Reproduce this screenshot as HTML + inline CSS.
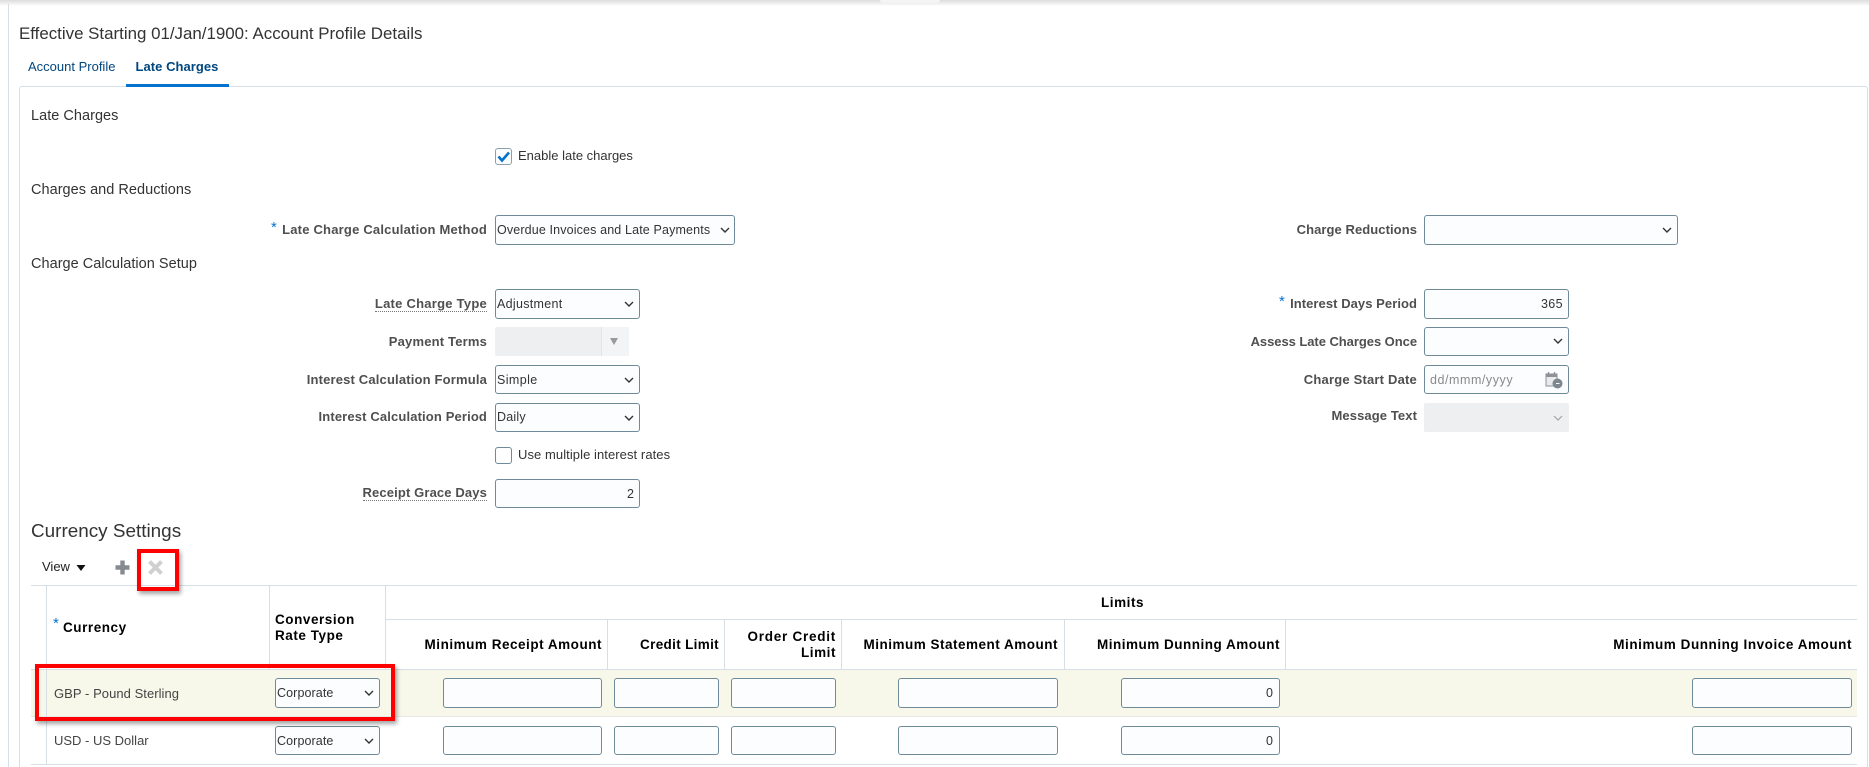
<!DOCTYPE html>
<html><head><meta charset="utf-8"><title>Account Profile Details</title>
<style>
html,body{margin:0;padding:0;background:#fff;width:1869px;height:767px;overflow:hidden}
body{position:relative;font-family:"Liberation Sans",Arial,sans-serif;color:#333}
.a{position:absolute;box-sizing:border-box}
.t{position:absolute;white-space:nowrap;line-height:20px;height:20px;font-size:13px;margin-top:1px}
.n{margin-top:0}
.h{font-size:14.5px;color:#333;letter-spacing:.03px}
.l{font-weight:bold;color:#4f4f4f;font-size:13px}
.k{font-weight:bold;color:#000;font-size:13.5px;letter-spacing:.55px}
.v{font-size:12.5px}
.f{position:absolute;box-sizing:border-box;background:#fcfdfe;border:1px solid #6f8a99;border-radius:3px}
.d{position:absolute;box-sizing:border-box;background:#eeeff1;border-radius:2px}
.line{position:absolute;background:#d6dfe6}
.s{color:#0572ce}
svg{position:absolute;overflow:visible}
.r{position:absolute;box-sizing:border-box;border:4px solid #f00;box-shadow:2px 3px 4px rgba(0,0,0,.35)}
.dot{position:absolute;height:0;border-top:1px dotted #777}
</style></head><body>

<div class="a" style="left:0;top:0;width:1869px;height:6px;background:linear-gradient(#dcdcdc,#fff)"></div>
<div class="a" style="left:880px;top:0;width:60px;height:3px;background:#f4f4f4;border-radius:0 0 6px 6px"></div>
<div class="line" style="left:8px;top:4px;width:1px;height:763px"></div>

<div class="t" style="left:19px;top:23px;font-size:16.9px;color:#333">Effective Starting 01/Jan/1900: Account Profile Details</div>
<div class="t n" style="left:28px;top:57px;color:#00467f">Account Profile</div>
<div class="t n" style="left:135.5px;top:57px;color:#00467f;font-weight:bold;letter-spacing:.05px">Late Charges</div>

<div class="a" style="left:19px;top:86px;width:1849px;height:690px;border:1px solid #d6dfe6;border-radius:3px 3px 0 0"></div>
<div class="a" style="left:126px;top:84px;width:103px;height:3px;background:#0572ce"></div>

<div class="t h" style="left:31px;top:105px">Late Charges</div>
<div class="t h" style="left:31px;top:179px">Charges and Reductions</div>
<div class="t h" style="left:31px;top:253px">Charge Calculation Setup</div>

<div class="f" style="left:495px;top:148px;width:17px;height:17px;border-color:#8aa0ad"></div>
<svg style="left:495px;top:148px" width="17" height="17" viewBox="0 0 17 17"><path d="M3.5 8.5 L7 12.5 L14 4.5" fill="none" stroke="#0572ce" stroke-width="2.6"/></svg>
<div class="t n" style="left:518px;top:146px">Enable late charges</div>

<div class="t s" style="left:271px;top:217px;font-size:15px">*</div>
<div class="t l" style="right:1382px;top:219px;letter-spacing:.21px">Late Charge Calculation Method</div>
<div class="f" style="left:495px;top:215px;width:240px;height:30px"></div>
<div class="t v" style="left:497px;top:219px;letter-spacing:.14px">Overdue Invoices and Late Payments</div>
<svg style="left:720px;top:227px" width="10" height="7" viewBox="0 0 10 7"><path d="M1 1 L5 5 L9 1" fill="none" stroke="#333" stroke-width="1.4"/></svg>

<div class="t l" style="right:452px;top:219px;letter-spacing:.07px">Charge Reductions</div>
<div class="f" style="left:1424px;top:215px;width:254px;height:30px"></div>
<svg style="left:1662px;top:227px" width="10" height="7" viewBox="0 0 10 7"><path d="M1 1 L5 5 L9 1" fill="none" stroke="#333" stroke-width="1.4"/></svg>

<div class="t l" style="right:1382px;top:293px;letter-spacing:.25px">Late Charge Type</div>
<div class="dot" style="left:375px;top:311px;width:112px"></div>
<div class="f" style="left:495px;top:289px;width:145px;height:30px"></div>
<div class="t v" style="left:497px;top:293px;letter-spacing:.3px">Adjustment</div>
<svg style="left:624px;top:301px" width="10" height="7" viewBox="0 0 10 7"><path d="M1 1 L5 5 L9 1" fill="none" stroke="#333" stroke-width="1.4"/></svg>

<div class="t l" style="right:1382px;top:331px;letter-spacing:.18px">Payment Terms</div>
<div class="d" style="left:495px;top:327px;width:134px;height:29px"></div>
<div class="a" style="left:601px;top:327px;width:28px;height:29px;border-left:1px solid #e2e4e6;background:#f3f4f5"></div>
<svg style="left:609px;top:337px" width="10" height="9" viewBox="0 0 10 9"><path d="M1 1 H9 L5 8 Z" fill="#9a9a9a"/></svg>

<div class="t l" style="right:1382px;top:369px;letter-spacing:.17px">Interest Calculation Formula</div>
<div class="f" style="left:495px;top:365px;width:145px;height:29px"></div>
<div class="t v" style="left:497px;top:369px;letter-spacing:.4px">Simple</div>
<svg style="left:624px;top:377px" width="10" height="7" viewBox="0 0 10 7"><path d="M1 1 L5 5 L9 1" fill="none" stroke="#333" stroke-width="1.4"/></svg>

<div class="t l n" style="right:1382px;top:407px;letter-spacing:.14px">Interest Calculation Period</div>
<div class="f" style="left:495px;top:403px;width:145px;height:29px"></div>
<div class="t v n" style="left:497px;top:407px;letter-spacing:.2px">Daily</div>
<svg style="left:624px;top:415px" width="10" height="7" viewBox="0 0 10 7"><path d="M1 1 L5 5 L9 1" fill="none" stroke="#333" stroke-width="1.4"/></svg>

<div class="f" style="left:495px;top:447px;width:17px;height:17px;background:#fff"></div>
<div class="t n" style="left:518px;top:445px;letter-spacing:.07px">Use multiple interest rates</div>

<div class="t l n" style="right:1382px;top:483px;letter-spacing:.13px">Receipt Grace Days</div>
<div class="dot" style="left:363px;top:500px;width:124px"></div>
<div class="f" style="left:495px;top:479px;width:145px;height:29px"></div>
<div class="t v" style="right:1235px;top:483px">2</div>

<div class="t s" style="left:1279px;top:291px;font-size:15px">*</div>
<div class="t l" style="right:452px;top:293px;letter-spacing:.06px">Interest Days Period</div>
<div class="f" style="left:1424px;top:289px;width:145px;height:30px"></div>
<div class="t v" style="right:306px;top:293px;letter-spacing:.4px">365</div>

<div class="t l" style="right:452px;top:331px;letter-spacing:-.05px">Assess Late Charges Once</div>
<div class="f" style="left:1424px;top:327px;width:145px;height:29px"></div>
<svg style="left:1553px;top:338px" width="10" height="7" viewBox="0 0 10 7"><path d="M1 1 L5 5 L9 1" fill="none" stroke="#333" stroke-width="1.4"/></svg>

<div class="t l" style="right:452px;top:369px;letter-spacing:.2px">Charge Start Date</div>
<div class="f" style="left:1424px;top:365px;width:145px;height:29px"></div>
<div class="t v" style="left:1430px;top:369px;color:#8a8a8a;letter-spacing:.55px">dd/mmm/yyyy</div>
<svg style="left:1545px;top:371px" width="18" height="18" viewBox="0 0 18 18"><rect x="1" y="3" width="11" height="12" fill="#e8eaec" stroke="#8c9298" stroke-width="1"/><rect x="1" y="3" width="11" height="3" fill="#8c9298"/><path d="M3.5 1V4M9.5 1V4" stroke="#8c9298" stroke-width="1.4"/><circle cx="12.5" cy="12.5" r="5" fill="#7f878e"/><path d="M11 12.5H14.5" stroke="#fff" stroke-width="1"/></svg>

<div class="t l n" style="right:452px;top:406px;letter-spacing:.1px">Message Text</div>
<div class="d" style="left:1424px;top:403px;width:145px;height:29px"></div>
<svg style="left:1553px;top:415px" width="10" height="7" viewBox="0 0 10 7"><path d="M1 1 L5 5 L9 1" fill="none" stroke="#a5a5a5" stroke-width="1.2"/></svg>

<div class="t" style="left:31px;top:521px;font-size:18.9px;color:#333">Currency Settings</div>

<div class="t n" style="left:42px;top:557px;color:#222">View</div>
<svg style="left:76px;top:565px" width="10" height="6" viewBox="0 0 10 6"><path d="M0.5 0 H9.5 L5 6 Z" fill="#111"/></svg>
<svg style="left:115px;top:560px" width="15" height="15" viewBox="0 0 15 15"><path d="M7.5 0.5V14.5M0.5 7.5H14.5" stroke="#858b90" stroke-width="4.4"/></svg>
<svg style="left:148px;top:560px" width="15" height="15" viewBox="0 0 15 15"><path d="M1.5 1.5L13.5 13.5M13.5 1.5L1.5 13.5" stroke="#cfd0d1" stroke-width="4"/></svg>

<!-- table -->
<div class="a" style="left:31px;top:669px;width:1826px;height:47px;background:#f7f8e9"></div>
<div class="line" style="left:31px;top:585px;width:1826px;height:1px"></div>
<div class="line" style="left:385px;top:619px;width:1472px;height:1px"></div>
<div class="line" style="left:31px;top:669px;width:1826px;height:1px"></div>
<div class="line" style="left:31px;top:716px;width:1826px;height:1px;background:#e8e8e4"></div>
<div class="line" style="left:31px;top:764px;width:1826px;height:1px"></div>
<div class="line" style="left:46px;top:586px;width:1px;height:178px"></div>
<div class="line" style="left:269px;top:586px;width:1px;height:83px"></div>
<div class="line" style="left:385px;top:586px;width:1px;height:83px"></div>
<div class="line" style="left:607px;top:620px;width:1px;height:49px"></div>
<div class="line" style="left:724px;top:620px;width:1px;height:49px"></div>
<div class="line" style="left:841px;top:620px;width:1px;height:49px"></div>
<div class="line" style="left:1064px;top:620px;width:1px;height:49px"></div>
<div class="line" style="left:1285px;top:620px;width:1px;height:49px"></div>

<div class="t s" style="left:53px;top:613px;font-size:15px">*</div>
<div class="t k" style="left:63px;top:617px">Currency</div>
<div class="t k" style="left:275px;top:609px">Conversion</div>
<div class="t k" style="left:275px;top:625px">Rate Type</div>
<div class="t k" style="left:1101px;top:592px">Limits</div>
<div class="t k" style="right:1267px;top:634px;letter-spacing:.52px">Minimum Receipt Amount</div>
<div class="t k" style="right:1150px;top:634px;letter-spacing:.33px">Credit Limit</div>
<div class="t k" style="right:1033px;top:626px;letter-spacing:.75px">Order Credit</div>
<div class="t k" style="right:1033px;top:642px">Limit</div>
<div class="t k" style="right:811px;top:634px;letter-spacing:.5px">Minimum Statement Amount</div>
<div class="t k" style="right:589px;top:634px;letter-spacing:.5px">Minimum Dunning Amount</div>
<div class="t k" style="right:17px;top:634px">Minimum Dunning Invoice Amount</div>

<div class="t" style="left:54px;top:683px;color:#444;letter-spacing:.05px">GBP - Pound Sterling</div>
<div class="f" style="left:275px;top:678px;width:105px;height:30px"></div>
<div class="t v" style="left:277px;top:682px;letter-spacing:.1px">Corporate</div>
<svg style="left:364px;top:690px" width="10" height="7" viewBox="0 0 10 7"><path d="M1 1 L5 5 L9 1" fill="none" stroke="#333" stroke-width="1.4"/></svg>
<div class="f" style="left:443px;top:678px;width:159px;height:30px"></div>
<div class="f" style="left:614px;top:678px;width:105px;height:30px"></div>
<div class="f" style="left:731px;top:678px;width:105px;height:30px"></div>
<div class="f" style="left:898px;top:678px;width:160px;height:30px"></div>
<div class="f" style="left:1121px;top:678px;width:159px;height:30px"></div>
<div class="t v n" style="right:596px;top:683px">0</div>
<div class="f" style="left:1692px;top:678px;width:160px;height:30px"></div>

<div class="t" style="left:54px;top:730px;color:#444">USD - US Dollar</div>
<div class="f" style="left:275px;top:726px;width:105px;height:29px"></div>
<div class="t v" style="left:277px;top:730px;letter-spacing:.1px">Corporate</div>
<svg style="left:364px;top:738px" width="10" height="7" viewBox="0 0 10 7"><path d="M1 1 L5 5 L9 1" fill="none" stroke="#333" stroke-width="1.4"/></svg>
<div class="f" style="left:443px;top:726px;width:159px;height:29px"></div>
<div class="f" style="left:614px;top:726px;width:105px;height:29px"></div>
<div class="f" style="left:731px;top:726px;width:105px;height:29px"></div>
<div class="f" style="left:898px;top:726px;width:160px;height:29px"></div>
<div class="f" style="left:1121px;top:726px;width:159px;height:29px"></div>
<div class="t v" style="right:596px;top:730px">0</div>
<div class="f" style="left:1692px;top:726px;width:160px;height:29px"></div>

<div class="r" style="left:137px;top:549px;width:42px;height:42px"></div>
<div class="r" style="left:35px;top:664px;width:360px;height:57px"></div>
</body></html>
